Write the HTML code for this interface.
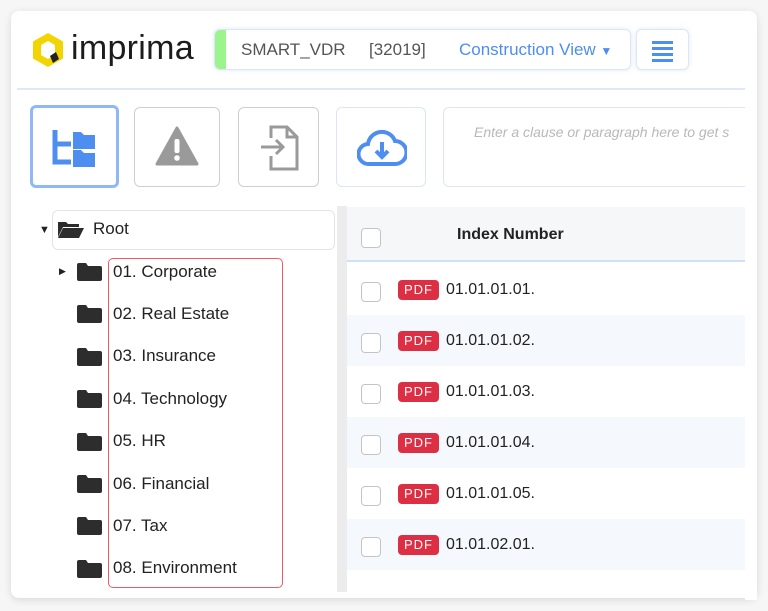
<!DOCTYPE html>
<html><head><style>
*{box-sizing:border-box;margin:0;padding:0}
body{width:768px;height:611px;background:#f6f6f6;font-family:"Liberation Sans",sans-serif;position:relative;overflow:hidden}
.card{position:absolute;left:11px;top:11px;width:746px;height:587px;background:#fff;border-radius:8px;box-shadow:0 2px 8px rgba(0,0,0,.12);overflow:hidden}
.a{position:absolute}
.box{position:absolute;border:1px solid #dfe6f3;border-radius:6px;background:#fff;box-shadow:0 0 4px rgba(120,160,240,.25)}
.tb{position:absolute;top:107px;height:80px;border:1px solid #cfcfcf;border-radius:6px;background:#fff}
.row{position:absolute;left:347px;width:398px;height:51px}
.cb{position:absolute;left:361px;width:20px;height:20px;border:1.5px solid #c4c4c4;border-radius:4px;background:#fff}
.pdf{position:absolute;left:398px;width:41px;height:20px;background:#dc2f44;color:#fff;border-radius:4px;font-size:13px;text-align:center;line-height:20px;letter-spacing:1px}
.num{position:absolute;left:446px;font-size:16px;color:#222}
.fl{position:absolute;left:77px;width:25px;height:18px}
.ft{position:absolute;left:113px;font-size:17px;color:#222}
</style></head><body>
<div class="card"></div>
<!-- logo -->
<svg class="a" style="left:30px;top:32px" width="36" height="36" viewBox="0 0 36 36"><polygon points="18,1 33,9.5 33,26.5 18,35 3,26.5 3,9.5" fill="#f2d500"/><polygon points="18,9 25,13 25,23 18,27 11,23 11,13" fill="#fff"/><polygon points="20,24 26,20 29,27 23,31" fill="#222"/></svg>
<div class="a" style="left:71px;top:29px;font-size:34px;color:#1c1c1c;letter-spacing:0.3px">imprima</div>
<!-- selector -->
<div class="box" style="left:214px;top:29px;width:417px;height:41px;overflow:hidden"><div class="a" style="left:0;top:0;width:11px;height:41px;background:#9cf48c"></div>
<div class="a" style="left:26px;top:10px;font-size:17px;color:#555">SMART_VDR</div>
<div class="a" style="left:154px;top:10px;font-size:17px;color:#555">[32019]</div>
<div class="a" style="left:244px;top:10px;font-size:17px;color:#4d8ef0">Construction View <span style="font-size:12px">▼</span></div></div>
<div class="box" style="left:636px;top:29px;width:53px;height:41px"><div class="a" style="left:15px;top:11px;width:21px;height:3px;background:#4d8ef0;box-shadow:0 6px 0 #4d8ef0,0 12px 0 #4d8ef0,0 18px 0 #4d8ef0"></div></div>
<div class="a" style="left:17px;top:88px;width:728px;height:2px;background:#dfe8fb"></div>
<!-- tool buttons -->
<div class="tb" style="left:30px;top:105px;width:89px;height:83px;border:3px solid #8fb8f6"><svg class="a" style="left:18px;top:20px" width="48" height="40" viewBox="0 0 48 40"><path d="M4 2v32h16M4 16h16" stroke="#4d8ef0" stroke-width="5" fill="none"/><path d="M22 4h8l3 3h11v14H22zM22 22h8l3 3h11v14H22z" fill="#4d8ef0"/></svg></div>
<div class="tb" style="left:134px;width:86px"><svg class="a" style="left:20px;top:18px" width="44" height="40" viewBox="0 0 44 40"><path d="M22 2L42 38H2z" fill="#9a9a9a" stroke="#9a9a9a" stroke-width="3" stroke-linejoin="round"/><rect x="19.5" y="13" width="5" height="14" rx="2" fill="#fff"/><circle cx="22" cy="32" r="2.8" fill="#fff"/></svg></div>
<div class="tb" style="left:238px;width:81px"><svg class="a" style="left:20px;top:16px" width="42" height="48" viewBox="0 0 42 48"><path d="M12 14V3h16l10 10v32H12V32" fill="none" stroke="#9a9a9a" stroke-width="3"/><path d="M28 3v10h10" fill="none" stroke="#9a9a9a" stroke-width="3"/><path d="M2 23h22M17 16l7 7-7 7" fill="none" stroke="#9a9a9a" stroke-width="3"/></svg></div>
<div class="tb" style="left:336px;width:90px;border-color:#dbe5f7"><svg class="a" style="left:20px;top:20px" width="50" height="40" viewBox="0 0 50 40"><path d="M12 36a10 10 0 0 1-1-20 14 14 0 0 1 27-3 11 11 0 0 1 0 23z" fill="none" stroke="#4d8ef0" stroke-width="4"/><path d="M25 14v14M19 23l6 6 6-6" fill="none" stroke="#4d8ef0" stroke-width="4"/></svg></div>
<div class="tb" style="left:443px;width:310px;border-color:#dbe5f7;border-right:none"><div class="a" style="left:30px;top:16px;font-size:14px;font-style:italic;color:#b8b8b8;white-space:nowrap">Enter a clause or paragraph here to get s</div></div>
<div class="a" style="left:745px;top:90px;width:12px;height:510px;background:#fff"></div>
<!-- tree -->
<div class="a" style="left:337px;top:206px;width:10px;height:386px;background:#ececec"></div>
<div class="a" style="left:39px;top:224px;font-size:11px;color:#222">▼</div>
<div class="box" style="left:52px;top:210px;width:283px;height:40px;box-shadow:none;border-color:#e4e4e4"></div>
<svg class="a" style="left:57px;top:219px" width="28" height="20" viewBox="0 0 28 20"><path d="M1 3h8l2 2h11v3H6L1 18z" fill="#2d2d2d"/><path d="M6 9h21l-5 10H1z" fill="#2d2d2d"/></svg>
<div class="a" style="left:93px;top:219px;font-size:17px;color:#222">Root</div>
<div class="a" style="left:108px;top:258px;width:175px;height:330px;border:1.5px solid #ee5b66;border-radius:5px"></div>
<div class="a" style="left:59px;top:266px;font-size:9px;color:#222">▶</div>
<svg width="0" height="0" style="position:absolute"><defs><symbol id="f" viewBox="0 0 25 18"><path d="M0 2a2 2 0 0 1 2-2h7l2 3h12a2 2 0 0 1 2 2v11a2 2 0 0 1-2 2H2a2 2 0 0 1-2-2z" fill="#2d2d2d"/></symbol></defs></svg>
<svg class="fl" style="top:263px"><use href="#f"/></svg><div class="ft" style="top:262px">01. Corporate</div>
<svg class="fl" style="top:305px"><use href="#f"/></svg><div class="ft" style="top:304px">02. Real Estate</div>
<svg class="fl" style="top:348px"><use href="#f"/></svg><div class="ft" style="top:346px">03. Insurance</div>
<svg class="fl" style="top:390px"><use href="#f"/></svg><div class="ft" style="top:389px">04. Technology</div>
<svg class="fl" style="top:433px"><use href="#f"/></svg><div class="ft" style="top:431px">05. HR</div>
<svg class="fl" style="top:475px"><use href="#f"/></svg><div class="ft" style="top:474px">06. Financial</div>
<svg class="fl" style="top:517px"><use href="#f"/></svg><div class="ft" style="top:516px">07. Tax</div>
<svg class="fl" style="top:560px"><use href="#f"/></svg><div class="ft" style="top:558px">08. Environment</div>
<!-- table -->
<div class="row" style="top:207px;height:55px;background:#f6f7f9;border-bottom:2px solid #cfe0fb"></div>
<div class="cb" style="top:228px"></div>
<div class="a" style="left:457px;top:226px;font-size:16px;font-weight:bold;color:#222">Index Number</div>
<div class="row" style="top:315px;background:#f5f8fd"></div>
<div class="row" style="top:417px;background:#f5f8fd"></div>
<div class="row" style="top:519px;background:#f5f8fd"></div>
<div class="cb" style="top:282px"></div><div class="pdf" style="top:280px">PDF</div><div class="num" style="top:281px">01.01.01.01.</div>
<div class="cb" style="top:333px"></div><div class="pdf" style="top:331px">PDF</div><div class="num" style="top:332px">01.01.01.02.</div>
<div class="cb" style="top:384px"></div><div class="pdf" style="top:382px">PDF</div><div class="num" style="top:383px">01.01.01.03.</div>
<div class="cb" style="top:435px"></div><div class="pdf" style="top:433px">PDF</div><div class="num" style="top:434px">01.01.01.04.</div>
<div class="cb" style="top:486px"></div><div class="pdf" style="top:484px">PDF</div><div class="num" style="top:485px">01.01.01.05.</div>
<div class="cb" style="top:537px"></div><div class="pdf" style="top:535px">PDF</div><div class="num" style="top:536px">01.01.02.01.</div>
</body></html>
